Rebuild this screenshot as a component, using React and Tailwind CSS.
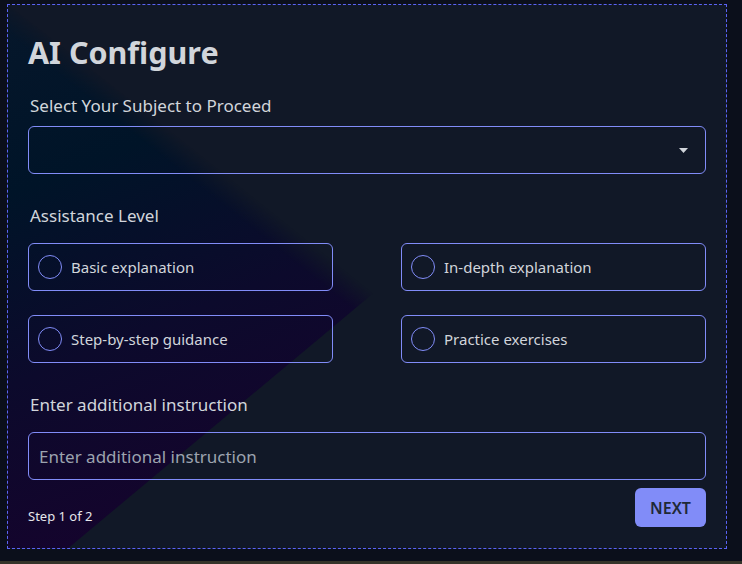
import React from "react";

function Radio({ label }) {
  return (
    <label className="flex h-12 items-center rounded-md border border-[#818cf8] px-[9px]">
      <span className="h-6 w-6 rounded-full border border-[#818cf8]" />
      <span className="ml-[9px] text-[15px] text-[#d1d5db]">{label}</span>
    </label>
  );
}

export default function App() {
  return (
    <div className="flex h-[564px] w-full flex-col bg-[#0b0f1b] font-['Noto_Sans',sans-serif]">
      <div className="relative ml-[7px] mt-[4px] h-[545px] w-[720px] overflow-hidden border border-dashed border-[#5b63f5] bg-[#111827]">
        <svg className="pointer-events-none absolute left-0 top-0" width="720" height="545" viewBox="0 0 720 545">
          <defs>
            <linearGradient id="g1" gradientUnits="userSpaceOnUse" x1="0" y1="0" x2="220" y2="545">
              <stop offset="0" stopColor="#06172b" />
              <stop offset="0.3" stopColor="#001428" />
              <stop offset="0.6" stopColor="#0c0a2c" />
              <stop offset="1" stopColor="#17022d" />
            </linearGradient>
            <linearGradient id="mg" gradientUnits="userSpaceOnUse" x1="184" y1="143" x2="168" y2="163">
              <stop offset="0" stopColor="#fff" stopOpacity="0" />
              <stop offset="1" stopColor="#fff" stopOpacity="1" />
            </linearGradient>
            <mask id="m1">
              <rect x="0" y="0" width="720" height="545" fill="url(#mg)" />
            </mask>
          </defs>
          <polygon points="0,0 368,286 58,545 0,545" fill="url(#g1)" mask="url(#m1)" />
        </svg>
        <div className="relative flex h-full flex-col px-5">
          <h1 className="mt-[27px] text-[30.5px] font-bold leading-[40px] text-[#d1d5db]">AI Configure</h1>
          <div className="mt-[22px] pl-[2px] text-[17px] leading-6 text-[#d1d5db]">Select Your Subject to Proceed</div>
          <div className="mt-[8px] flex h-12 items-center justify-end rounded-md border border-[#818cf8] pr-[17px]">
            <svg width="9" height="5" viewBox="0 0 9 5"><polygon points="0,0 9,0 4.5,5" fill="#d1d5db" /></svg>
          </div>
          <div className="mt-[30px] pl-[2px] text-[17px] leading-6 text-[#d1d5db]">Assistance Level</div>
          <div className="mt-[15px] grid grid-cols-2 gap-x-[68px] gap-y-6">
            <Radio label="Basic explanation" />
            <Radio label="In-depth explanation" />
            <Radio label="Step-by-step guidance" />
            <Radio label="Practice exercises" />
          </div>
          <div className="mt-[30px] pl-[2px] text-[17px] leading-6 text-[#d1d5db]">Enter additional instruction</div>
          <input
            className="mt-[15px] h-12 rounded-md border border-[#818cf8] bg-transparent px-[10px] text-[17px] text-[#d1d5db] outline-none placeholder:text-[#9ca3af]"
            placeholder="Enter additional instruction"
          />
          <div className="mt-2 flex items-end justify-between">
            <span className="mb-[2px] text-[13px] leading-[18px] text-[#e5e7eb]">Step 1 of 2</span>
            <button className="h-[39px] w-[71px] rounded-md bg-[#818cf8] text-[16px] font-semibold text-[#1f2937]">NEXT</button>
          </div>
        </div>
      </div>
      <div className="mt-auto h-[3px] bg-[#34342a]" />
    </div>
  );
}
